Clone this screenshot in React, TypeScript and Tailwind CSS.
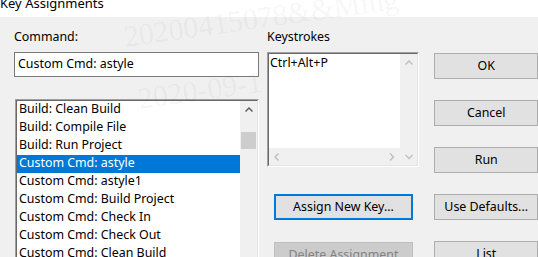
import React from "react";

const commands = [
  "Build: Clean Build",
  "Build: Compile File",
  "Build: Run Project",
  "Custom Cmd: astyle",
  "Custom Cmd: astyle1",
  "Custom Cmd: Build Project",
  "Custom Cmd: Check In",
  "Custom Cmd: Check Out",
  "Custom Cmd: Clean Build",
];

function Chevron({ dir, color }: { dir: "up" | "down" | "left" | "right"; color: string }) {
  const paths: Record<string, string> = {
    up: "M0.5 4.5 L4 1 L7.5 4.5",
    down: "M0.5 1 L4 4.5 L7.5 1",
    left: "M4.5 0.5 L1 4 L4.5 7.5",
    right: "M1 0.5 L4.5 4 L1 7.5",
  };
  const horiz = dir === "up" || dir === "down";
  return (
    <svg width={horiz ? 8 : 6} height={horiz ? 6 : 8} viewBox={horiz ? "0 0 8 6" : "0 0 6 8"}>
      <path d={paths[dir]} fill="none" stroke={color} strokeWidth="1.5" />
    </svg>
  );
}

function Button({ label, className = "" }: { label: string; className?: string }) {
  return (
    <div
      className={
        "flex h-[26px] items-center justify-center border border-[#adadad] bg-[#e1e1e1] text-[12.4px] text-black " +
        className
      }
    >
      {label}
    </div>
  );
}

export default function App() {
  return (
    <div className="relative h-[257px] w-[538px] overflow-hidden bg-[#f0f0f0] font-['Noto_Sans',sans-serif] text-black">
      <div className="h-[17px] overflow-hidden bg-white">
        <div className="-mt-[6px] text-[13px] leading-[18px]">Key Assignments</div>
      </div>

      <div className="flex pl-[14px]">
        {/* Column 1 */}
        <div className="flex w-[245px] flex-col">
          <div className="mt-[11px] text-[12.4px] leading-[18px]">Command:</div>
          <div className="mt-[6px] h-[25px] border border-[#7a7a7a] bg-white pl-[3px] text-[12.4px] leading-[22px]">
            Custom Cmd: astyle
          </div>
          <div className="ml-[1px] mt-[22px] h-[170px] w-[244px] border-l border-t border-b border-r border-l-[#a0a0a0] border-t-[#a0a0a0] border-r-white border-b-white">
            <div className="flex h-full border-l border-t border-r border-b border-l-[#696969] border-t-[#696969] border-r-[#e3e3e3] border-b-[#e3e3e3] bg-white">
              <div className="flex flex-1 flex-col">
                {commands.map((c, i) => (
                  <div
                    key={c}
                    className={
                      "h-[18px] pb-[2px] pl-[2px] text-[12.4px] leading-[16px] " +
                      (i === 3 ? "bg-[#0078d7] text-white" : "text-black")
                    }
                  >
                    {c}
                  </div>
                ))}
              </div>
              <div className="flex w-[17px] flex-col items-center bg-[#f0f0f0]">
                <div className="flex h-[17px] w-full items-center justify-center">
                  <Chevron dir="up" color="#606060" />
                </div>
                <div className="mt-[14px] h-[17px] w-[15px] bg-[#cdcdcd]" />
              </div>
            </div>
          </div>
        </div>

        {/* Column 2 */}
        <div className="ml-[8px] flex w-[153px] flex-col">
          <div className="mt-[11px] text-[12.4px] leading-[18px]">Keystrokes</div>
          <div className="mt-[6px] h-[115px] border-l border-t border-b border-r border-l-[#a0a0a0] border-t-[#a0a0a0] border-r-white border-b-white">
            <div className="flex h-full border-l border-t border-r border-b border-l-[#696969] border-t-[#696969] border-r-[#e3e3e3] border-b-[#e3e3e3] bg-white">
              <div className="flex flex-1 flex-col">
                <div className="flex-1 pl-[1px] text-[12.4px] leading-[18px]">Ctrl+Alt+P</div>
                <div className="flex h-[17px] items-center justify-between bg-[#f0f0f0] px-[5px]">
                  <Chevron dir="left" color="#c0c0c0" />
                  <Chevron dir="right" color="#c0c0c0" />
                </div>
              </div>
              <div className="flex w-[17px] flex-col items-center justify-between bg-[#f0f0f0]">
                <div className="flex h-[17px] w-full items-center justify-center">
                  <Chevron dir="up" color="#c0c0c0" />
                </div>
                <div className="flex h-[17px] w-full items-center justify-center">
                  <Chevron dir="down" color="#c0c0c0" />
                </div>
              </div>
            </div>
          </div>
          <div className="ml-[7px] mt-[27px] flex h-[26px] w-[139px] items-center justify-center border-2 border-[#0078d7] bg-[#e1e1e1] text-[12.4px]">
            Assign New Key...
          </div>
          <div className="ml-[7px] mt-[22px] flex h-[26px] w-[139px] items-center justify-center border border-[#bfbfbf] bg-[#cccccc] text-[12.4px] text-[#838383]">
            Delete Assignment
          </div>
        </div>

        {/* Column 3 */}
        <div className="ml-[15px] flex w-[104px] flex-col gap-[21px] pt-[36px]">
          <Button label="OK" />
          <Button label="Cancel" />
          <Button label="Run" />
          <Button label="Use Defaults..." />
          <Button label="List" />
        </div>
      </div>

      {/* Watermark overlay */}
      <div className="pointer-events-none absolute left-[124px] top-[22px] origin-left -rotate-[8deg] whitespace-nowrap font-['Liberation_Serif',serif] text-[30px] leading-[30px] text-black/[0.05]">
        20200415078&amp;&amp;Ming
      </div>
      <div className="pointer-events-none absolute left-[138px] top-[84px] origin-left -rotate-[8deg] whitespace-nowrap font-['Liberation_Serif',serif] text-[30px] leading-[30px] text-black/[0.05]">
        2020-09-1
      </div>
    </div>
  );
}
